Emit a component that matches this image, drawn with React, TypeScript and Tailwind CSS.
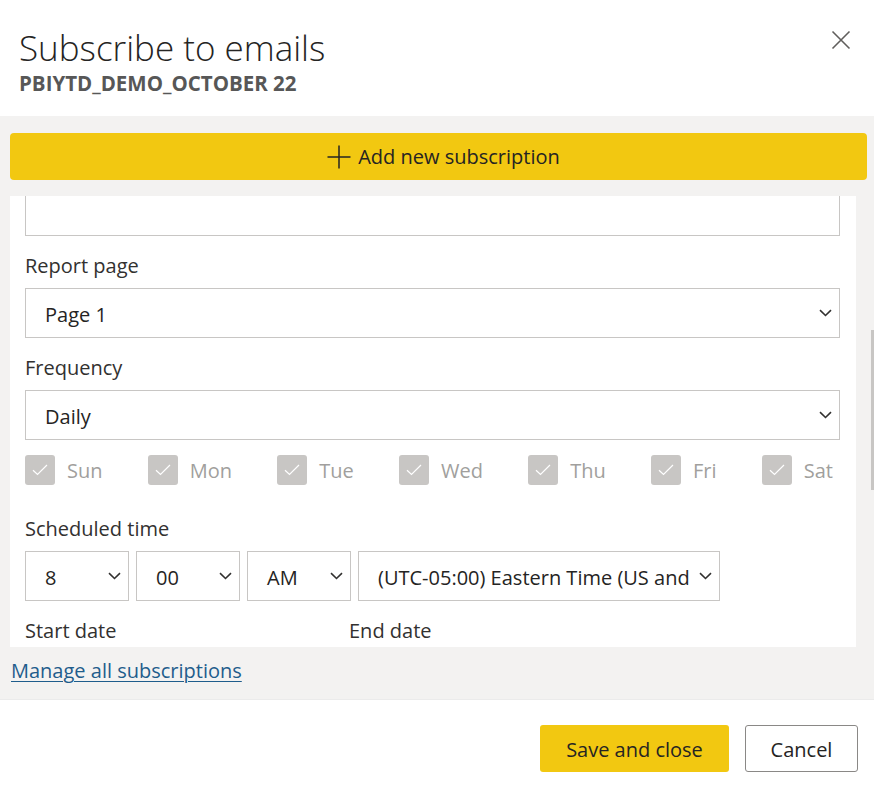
import React from "react";

const Chevron = ({ className = "" }: { className?: string }) => (
  <svg width="13" height="8" viewBox="0 0 13 8" className={className} fill="none">
    <path d="M1 1.2 L6.5 6.5 L12 1.2" stroke="#323130" strokeWidth="1.6" />
  </svg>
);

const Select = ({ value, className = "" }: { value: string; className?: string }) => (
  <div className={`flex items-center h-[50px] border border-[#c8c6c4] bg-white pl-[19px] pr-[7px] pt-[3px] ${className}`}>
    <span className="flex-1 whitespace-nowrap text-[20px] text-[#252423]">{value}</span>
    <Chevron className="shrink-0 ml-1 -mt-[3px]" />
  </div>
);

const Label = ({ children, className = "" }: { children: React.ReactNode; className?: string }) => (
  <div className={`h-[28px] leading-[28px] text-[20px] text-[#323130] ${className}`}>{children}</div>
);

const days = ["Sun", "Mon", "Tue", "Wed", "Thu", "Fri", "Sat"];

export default function App() {
  return (
    <div
      className="w-[874px] h-[792px] bg-white flex flex-col overflow-hidden"
      style={{ fontFamily: '"Open Sans", "Noto Sans", sans-serif' }}
    >
      {/* Header */}
      <div className="relative h-[116px] shrink-0 px-[19px] pt-[25px]">
        <div className="text-[35px] leading-[46px] font-light text-[#252423]">Subscribe to emails</div>
        <div className="text-[20.5px] leading-[26px] font-bold text-[#575757] -mt-[1px]">PBIYTD_DEMO_OCTOBER 22</div>
        <button className="absolute left-[831px] top-[30px] w-[20px] h-[20px] flex items-center justify-center">
          <svg width="20" height="20" viewBox="0 0 20 20" fill="none">
            <path d="M1.5 1.5 L18.5 18.5 M18.5 1.5 L1.5 18.5" stroke="#605e5c" strokeWidth="1.6" />
          </svg>
        </button>
      </div>

      {/* Gray body */}
      <div className="flex flex-col bg-[#f3f2f1] h-[583px] shrink-0">
        <div className="pt-[17px] pl-[10px] pr-[7px]">
          <button className="w-full h-[47px] rounded-[4px] bg-[#f2c811] flex items-center justify-center gap-[7px] pl-[10px] text-[20px] text-[#252423]">
            <svg width="24" height="24" viewBox="0 0 24 24" fill="none">
              <path d="M12 0.5 V23.5 M0.5 12 H23.5" stroke="#252423" strokeWidth="1.5" />
            </svg>
            <span>Add new subscription</span>
          </button>
        </div>

        <div className="flex mt-[16px] h-[451px]">
          <div className="ml-[10px] w-[846px] bg-white overflow-hidden pl-[15px] pr-[16px]">
            <div className="-mt-[10px] h-[50px] border border-[#c8c6c4]" />
            <Label className="mt-[16px]">Report page</Label>
            <Select value="Page 1" className="mt-[8px]" />
            <Label className="mt-[16px]">Frequency</Label>
            <Select value="Daily" className="mt-[8px]" />
            <div className="mt-[15px] flex justify-between w-[808px]">
              {days.map((d) => (
                <div key={d} className="flex items-center gap-[12px] h-[30px]">
                  <div className="w-[30px] h-[30px] rounded-[3px] bg-[#c8c6c4] flex items-center justify-center">
                    <svg width="16" height="12" viewBox="0 0 16 12" fill="none">
                      <path d="M1 6.2 L5.5 10.5 L15 1" stroke="#ffffff" strokeWidth="1.2" />
                    </svg>
                  </div>
                  <span className="text-[20px] text-[#a19f9d] pt-[2px]">{d}</span>
                </div>
              ))}
            </div>
            <Label className="mt-[30px]">Scheduled time</Label>
            <div className="mt-[8px] flex gap-[7px]">
              <Select value="8" className="w-[104px]" />
              <Select value="00" className="w-[104px]" />
              <Select value="AM" className="w-[104px]" />
              <Select value="(UTC-05:00) Eastern Time (US and" className="w-[362px]" />
            </div>
            <div className="mt-[16px] flex">
              <Label className="w-[324px]">Start date</Label>
              <Label>End date</Label>
            </div>
          </div>
          <div className="flex-1 relative">
            <div className="absolute left-[15px] top-[134px] w-[3px] h-[160px] bg-[#c8c6c4]" />
          </div>
        </div>

        <div className="flex-1 flex items-center pl-[11px] pb-[4px]">
          <a href="#" className="text-[20px] text-[#1f5d8c] underline underline-offset-[3px] decoration-1">
            Manage all subscriptions
          </a>
        </div>
      </div>

      {/* Footer */}
      <div className="flex-1 flex justify-end items-start pt-[25px] pr-[16px] gap-[16px] border-t border-[#ebebeb]">
        <button className="w-[189px] h-[47px] rounded-[3px] bg-[#f2c811] text-[20px] text-[#252423] pt-[2px]">Save and close</button>
        <button className="w-[113px] h-[47px] rounded-[3px] border border-[#8a8886] bg-white text-[20px] text-[#252423] pt-[2px]">
          Cancel
        </button>
      </div>
    </div>
  );
}
